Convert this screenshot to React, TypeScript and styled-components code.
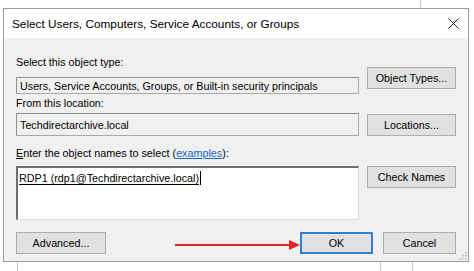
import styled, { createGlobalStyle } from "styled-components";

const GlobalStyle = createGlobalStyle`
  html, body {
    margin: 0;
    padding: 0;
    background: #ffffff;
  }
  body {
    font-family: "Liberation Sans", Arial, sans-serif;
    color: #000;
  }
`;

const Page = styled.div`
  position: relative;
  width: 474px;
  height: 271px;
  overflow: hidden;
  background: #fff;
`;

// faint edges of whatever sits behind the dialog
const BackLine = styled.div<{ $x: number; $y: number; $w: number; $h: number }>`
  position: absolute;
  left: ${(p) => p.$x}px;
  top: ${(p) => p.$y}px;
  width: ${(p) => p.$w}px;
  height: ${(p) => p.$h}px;
  background: #c8c8c8;
`;

const Window = styled.div`
  position: relative;
  margin: 8px 0 0 3px;
  width: 466px;
  height: 254px;
  box-sizing: border-box;
  border: 1px solid #9a9a9a;
  display: flex;
  flex-direction: column;
  background: #f0f0f0;
`;

const TitleBar = styled.div`
  height: 29px;
  background: #fff;
  display: flex;
  align-items: center;
  justify-content: space-between;
  padding-left: 8px;
`;

const Title = styled.span`
  font-size: 11.8px;
  color: #000;
  padding-top: 1px;
`;

const CloseBox = styled.div`
  width: 30px;
  height: 29px;
  display: flex;
  align-items: center;
  justify-content: center;
`;

const Body = styled.div`
  flex: 1;
  padding: 17px 12px 0 12px;
  display: flex;
  flex-direction: column;
  font-size: 10.75px;
`;

const Section = styled.div<{ $top: number }>`
  display: flex;
  align-items: flex-start;
  gap: 8px;
  margin-top: ${(p) => p.$top}px;
`;

const Column = styled.div`
  width: 343px;
  display: flex;
  flex-direction: column;
`;

const Label = styled.div`
  line-height: 14px;
  height: 14px;
  color: #000;
`;

const Field = styled.div<{ $top: number; $h: number }>`
  margin-top: ${(p) => p.$top}px;
  height: ${(p) => p.$h}px;
  box-sizing: border-box;
  border: 1px solid #a9a9a9;
  border-top-color: #8f8f8f;
  border-left-color: #8f8f8f;
  background: #f0f0f0;
  display: flex;
  align-items: center;
  padding-left: 3px;
  white-space: nowrap;
`;

const NamesBox = styled.div`
  margin-top: 6px;
  height: 54px;
  box-sizing: border-box;
  background: #fff;
  border-top: 2px solid #6e6e6e;
  border-left: 2px solid #6e6e6e;
  border-right: 1px solid #dcdcdc;
  border-bottom: 1px solid #dcdcdc;
  padding: 3px 0 0 1px;
  line-height: 14px;
`;

const Resolved = styled.span`
  text-decoration: underline;
  text-underline-offset: 2px;
`;

const Caret = styled.span`
  display: inline-block;
  width: 1px;
  height: 14px;
  background: #000;
  vertical-align: top;
  margin-left: 1px;
`;

const Button = styled.button<{ $top?: number; $w?: number; $default?: boolean }>`
  margin-top: ${(p) => p.$top ?? 0}px;
  width: ${(p) => p.$w ?? 89}px;
  height: 22px;
  box-sizing: border-box;
  padding: 0;
  font-family: "Liberation Sans", Arial, sans-serif;
  font-size: 10.75px;
  color: #000;
  background: #e1e1e1;
  border: ${(p) => (p.$default ? "2px solid #2f7fd1" : "1px solid #adadad")};
  flex-shrink: 0;
`;

const Link = styled.span`
  color: #1565c0;
  text-decoration: underline;
`;

const Mnemonic = styled.span`
  text-decoration: underline;
`;

const Footer = styled.div`
  position: relative;
  margin-top: 12px;
  display: flex;
  align-items: center;
  justify-content: space-between;
`;

const RightButtons = styled.div`
  display: flex;
  gap: 10px;
`;

const Arrow = styled.svg`
  position: absolute;
  left: 159px;
  top: 6px;
`;

const Grip = styled.svg`
  position: absolute;
  right: 1px;
  bottom: 1px;
`;

export default function App() {
  return (
    <Page>
      <GlobalStyle />
      <BackLine $x={420} $y={0} $w={1} $h={8} />
      <BackLine $x={17} $y={262} $w={1} $h={9} />
      <BackLine $x={380} $y={262} $w={1} $h={9} />
      <BackLine $x={412} $y={262} $w={1} $h={9} />
      <Window>
        <TitleBar>
          <Title>Select Users, Computers, Service Accounts, or Groups</Title>
          <CloseBox>
            <svg width="11" height="11" viewBox="0 0 11 11">
              <path d="M0.5 0.5 L10.5 10.5 M10.5 0.5 L0.5 10.5" stroke="#222" strokeWidth="1" fill="none" />
            </svg>
          </CloseBox>
        </TitleBar>
        <Body>
          <Section $top={0}>
            <Column>
              <Label>Select this object type:</Label>
              <Field $top={8} $h={17}>
                Users, Service Accounts, Groups, or Built-in security principals
              </Field>
            </Column>
            <Button $top={12}>Object Types...</Button>
          </Section>
          <Section $top={2}>
            <Column>
              <Label>From this location:</Label>
              <Field $top={3} $h={23}>
                Techdirectarchive.local
              </Field>
            </Column>
            <Button $top={18}>Locations...</Button>
          </Section>
          <Section $top={10}>
            <Column>
              <Label>
                <Mnemonic>E</Mnemonic>nter the object names to select (<Link>examples</Link>):
              </Label>
              <NamesBox>
                <Resolved>RDP1 (rdp1@Techdirectarchive.local)</Resolved>
                <Caret />
              </NamesBox>
            </Column>
            <Button $top={20}>Check Names</Button>
          </Section>
          <Footer>
            <Button $w={90} $top={0}>Advanced...</Button>
            <RightButtons>
              <Button $w={73} $default>OK</Button>
              <Button $w={73}>Cancel</Button>
            </RightButtons>
            <Arrow width="126" height="14" viewBox="0 0 126 14">
              <line x1="0" y1="7" x2="116" y2="7" stroke="#e3242b" strokeWidth="2" />
              <path d="M114 2 L125 7 L114 12 Z" fill="#e3242b" />
            </Arrow>
          </Footer>
        </Body>
        <Grip width="8" height="8" viewBox="0 0 8 8">
          <g fill="#b5b5b5">
            <rect x="6" y="0" width="1.5" height="1.5" />
            <rect x="3" y="3" width="1.5" height="1.5" />
            <rect x="6" y="3" width="1.5" height="1.5" />
            <rect x="0" y="6" width="1.5" height="1.5" />
            <rect x="3" y="6" width="1.5" height="1.5" />
            <rect x="6" y="6" width="1.5" height="1.5" />
          </g>
        </Grip>
      </Window>
    </Page>
  );
}
